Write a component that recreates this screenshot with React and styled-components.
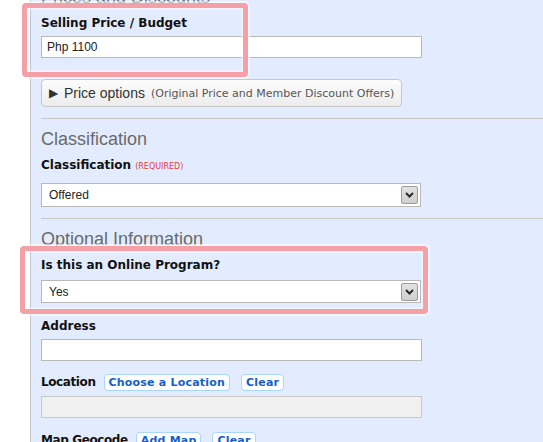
import React from 'react';
import styled, { createGlobalStyle } from 'styled-components';

const GlobalStyle = createGlobalStyle`
  html, body {
    margin: 0;
    padding: 0;
    background: #ffffff;
    overflow: hidden;
  }
`;

const Page = styled.div`
  display: flex;
  min-height: 100vh;
`;

const Gutter = styled.div`
  width: 30px;
  flex-shrink: 0;
  background: #ffffff;
`;

const Panel = styled.div`
  flex: 1;
  position: relative;
  background: #e3ecfe;
  border-left: 1px solid #c3c7cf;
  padding-left: 10px;
  min-height: 100vh;
`;

const SectionTitle = styled.h2`
  margin: ${p => p.first ? '-14px' : '9px'} 0 0;
  font-family: "Liberation Sans", Arial, sans-serif;
  font-weight: normal;
  font-size: 18px;
  line-height: 22px;
  color: #6a6a6a;
`;

const Divider = styled.hr`
  margin: ${p => p.top || 11}px 0 0 0;
  border: 0;
  border-top: 1px solid #c6c8cc;
  height: 0;
`;

const Field = styled.div`
  position: relative;
  margin-top: ${p => p.top}px;
`;

const Label = styled.label`
  display: block;
  font-family: "DejaVu Sans", Verdana, sans-serif;
  font-weight: bold;
  font-size: 12px;
  line-height: 15px;
  color: #111;
`;

const Required = styled.span`
  margin-left: 4px;
  font-weight: normal;
  font-size: 8px;
  color: #e03a48;
`;

const TextInput = styled.input`
  display: block;
  box-sizing: border-box;
  width: 381px;
  height: 22px;
  margin-top: ${p => p.gap || 5}px;
  padding: 0 5px;
  border: 1px solid #b9b9b9;
  background: ${p => p.disabled ? '#f0f0f0' : '#ffffff'};
  border-color: ${p => p.disabled ? '#c8c8c8' : '#b9b9b9'};
  font-family: "Liberation Sans", Arial, sans-serif;
  font-size: 12px;
  color: #222;
  outline: none;
`;

const SelectBox = styled.div`
  display: flex;
  align-items: center;
  box-sizing: border-box;
  width: 380px;
  height: ${p => p.h || 24}px;
  margin-top: ${p => p.gap || 9}px;
  padding: 2px;
  border: 1px solid #b9b9b9;
  background: #ffffff;
`;

const SelectValue = styled.div`
  flex: 1;
  padding-left: 5px;
  font-family: "Liberation Sans", Arial, sans-serif;
  font-size: 12px;
  color: #222;
`;

const ArrowButton = styled.div`
  box-sizing: border-box;
  width: 17px;
  height: 18px;
  display: flex;
  align-items: center;
  justify-content: center;
  border: 1px solid #9c9c9c;
  border-radius: 2px;
  background: linear-gradient(#e2e2e2, #cfcfcf);
`;

const OptionsButton = styled.button`
  display: flex;
  align-items: center;
  box-sizing: border-box;
  width: 361px;
  height: 28px;
  margin-top: 21px;
  padding: 0 0 0 7px;
  border: 1px solid #c8c8c8;
  border-radius: 4px;
  background: linear-gradient(#fdfdfd, #ececec);
  cursor: pointer;
  font-family: "Liberation Sans", Arial, sans-serif;
  font-size: 14px;
  color: #333;
  white-space: nowrap;
`;

const Triangle = styled.span`
  font-size: 12px;
  color: #333;
  margin-right: 6px;
`;

const OptionsNote = styled.span`
  margin-left: 6px;
  font-family: "DejaVu Sans", Verdana, sans-serif;
  font-size: 11px;
  color: #555;
`;

const ActionRow = styled.div`
  display: flex;
  align-items: center;
  gap: 11px;
  height: 17px;
  margin-top: ${p => p.top}px;
  font-family: "DejaVu Sans", Verdana, sans-serif;
`;

const RowLabel = styled(Label)`
  display: inline-block;
  margin-right: -3px;
  letter-spacing: -0.4px;
`;

const LinkButton = styled.button`
  box-sizing: border-box;
  height: 17px;
  padding: 0 4px;
  border: 1px solid #a9d6fa;
  border-radius: 4px;
  background: #ffffff;
  font-family: "DejaVu Sans", Verdana, sans-serif;
  font-weight: bold;
  font-size: 11px;
  line-height: 15px;
  letter-spacing: 0.2px;
  color: #1560c8;
  cursor: pointer;
`;

const Highlight = styled.div`
  position: absolute;
  left: ${p => p.x}px;
  top: ${p => p.y}px;
  width: ${p => p.w}px;
  height: ${p => p.h}px;
  box-sizing: border-box;
  border: 5px solid #f5a0a6;
  border-radius: 4px;
  box-shadow: 0 0 0 2px rgba(255, 255, 255, 0.55), inset 0 0 0 2px rgba(255, 255, 255, 0.4);
  pointer-events: none;
`;

const Chevron = () => (
  <svg width="9" height="6" viewBox="0 0 9 6">
    <polyline points="1,1 4.5,4.5 8,1" fill="none" stroke="#2a2a2a" strokeWidth="2" />
  </svg>
);

const Select = ({ value, gap, h }) => (
  <SelectBox gap={gap} h={h}>
    <SelectValue>{value}</SelectValue>
    <ArrowButton><Chevron /></ArrowButton>
  </SelectBox>
);

export default function App() {
  return (
    <>
      <GlobalStyle />
      <Page>
        <Gutter />
        <Panel>
          <SectionTitle first>Prices and Discounts</SectionTitle>

          <Field top={8}>
            <Highlight x={-19} y={-13} w={226} h={74} />
            <Label>Selling Price / Budget</Label>
            <TextInput defaultValue="Php 1100" />
          </Field>

          <OptionsButton>
            <Triangle>▶</Triangle>
            Price options
            <OptionsNote>(Original Price and Member Discount Offers)</OptionsNote>
          </OptionsButton>

          <Divider top={11} />
          <SectionTitle>Classification</SectionTitle>

          <Field top={8}>
            <Label>
              Classification<Required>(REQUIRED)</Required>
            </Label>
            <Select value="Offered" gap={9} h={24} />
          </Field>

          <Divider top={11} />
          <SectionTitle>Optional Information</SectionTitle>

          <Field top={8}>
            <Highlight x={-21} y={-12} w={408} h={68} />
            <Label>Is this an Online Program?</Label>
            <Select value="Yes" gap={7} h={23} />
          </Field>

          <Field top={16}>
            <Label>Address</Label>
            <TextInput gap={5} />
          </Field>

          <ActionRow top={13}>
            <RowLabel>Location</RowLabel>
            <LinkButton>Choose a Location</LinkButton>
            <LinkButton>Clear</LinkButton>
          </ActionRow>
          <TextInput disabled gap={5} />

          <ActionRow top={14}>
            <RowLabel>Map Geocode</RowLabel>
            <LinkButton>Add Map</LinkButton>
            <LinkButton>Clear</LinkButton>
          </ActionRow>
        </Panel>
      </Page>
    </>
  );
}
